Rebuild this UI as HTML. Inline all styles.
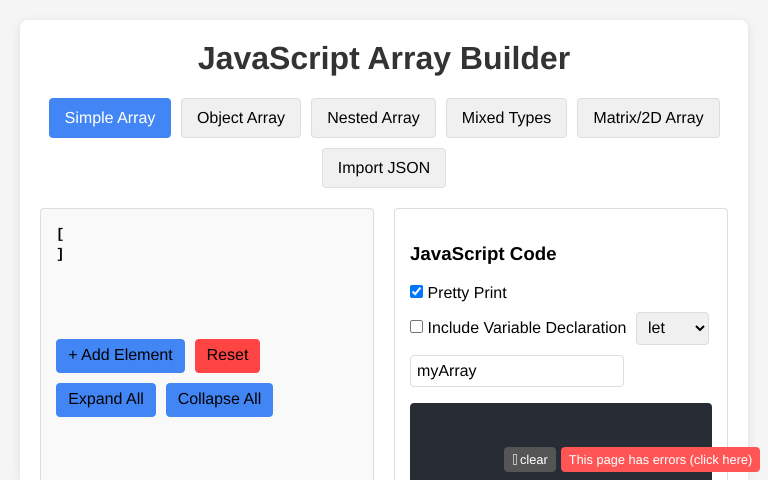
<!DOCTYPE html>
<html><head><meta charset="utf-8"><style>
html,body{margin:0;padding:0;width:768px;height:480px;overflow:hidden;background:#f5f5f5;font-family:"Liberation Sans",Arial,sans-serif;text-rendering:geometricPrecision;}
*{box-sizing:border-box}
#w{position:relative;width:768px;height:480px;overflow:hidden}
.a{position:absolute;white-space:nowrap}
#card{left:20px;top:20px;width:728px;height:460px;background:#fff;border-radius:8px 8px 0 0;box-shadow:0 2px 10px rgba(0,0,0,.1)}
h1{margin:0;left:20px;width:728px;top:40px;text-align:center;font-size:32px;line-height:37px;font-weight:700;color:#333}
.b{height:40px;border:1px solid #ddd;background:#f0f0f0;border-radius:4px;font-size:16px;line-height:40px;text-align:center;color:#000}
.p{border:1px solid #ddd;border-bottom:0;border-radius:4px 4px 0 0;top:208px;width:334px;height:272px}
.g{height:34px;border-radius:4px;background:#4285f4;font-size:16px;line-height:34px;text-align:center;color:#000}
.t{font-size:16px;line-height:18px;color:#000}
</style></head><body>
<div id="w">
<div class="a" id="card"></div>
<h1 class="a">JavaScript Array Builder</h1>
<div class="a b" style="left:49px;top:98px;width:122px;background:#4285f4;border-color:#4285f4;color:#fff">Simple Array</div>
<div class="a b" style="left:181px;top:98px;width:120px">Object Array</div>
<div class="a b" style="left:311px;top:98px;width:125px">Nested Array</div>
<div class="a b" style="left:446px;top:98px;width:121px">Mixed Types</div>
<div class="a b" style="left:577px;top:98px;width:143px">Matrix/2D Array</div>
<div class="a b" style="left:322px;top:148px;width:124px">Import JSON</div>

<div class="a p" style="left:40px;background:#f9f9f9"></div>
<div class="a" style="left:56px;top:226px;font:bold 14px/18px 'Liberation Mono',monospace;color:#000">[</div>
<div class="a" style="left:56px;top:246px;font:bold 14px/18px 'Liberation Mono',monospace;color:#000">]</div>
<div class="a g" style="left:56px;top:339px;width:129px">+ Add Element</div>
<div class="a g" style="left:195px;top:339px;width:65px;background:#f44">Reset</div>
<div class="a g" style="left:56px;top:383px;width:100px">Expand All</div>
<div class="a g" style="left:166px;top:383px;width:107px">Collapse All</div>

<div class="a p" style="left:394px;background:#fff"></div>
<div class="a" style="left:410px;top:243px;font-size:18.72px;font-weight:700;line-height:22px;color:#000">JavaScript Code</div>
<input class="a" type="checkbox" checked style="left:410px;top:285px;width:13px;height:13px;margin:0">
<div class="a t" style="left:427.5px;top:285px">Pretty Print</div>
<input class="a" type="checkbox" style="left:410px;top:320px;width:13px;height:13px;margin:0">
<div class="a t" style="left:427.5px;top:320px">Include Variable Declaration</div>
<select class="a" style="left:636px;top:312px;width:73px;height:33px;margin:0;padding:0 0 0 7px;font:16px 'Liberation Sans',sans-serif;background-color:#f0f0f0;border:1px solid #ddd;border-radius:4px;color:#000;text-rendering:geometricPrecision"><option>let</option></select>
<input class="a" type="text" value="myArray" style="left:410px;top:355px;width:214px;height:32px;margin:0;padding:2px 6px 0;font:16px 'Liberation Sans',sans-serif;border:1px solid #ddd;border-radius:4px;color:#000;background:#fff;text-rendering:geometricPrecision">
<div class="a" style="left:410px;top:403px;width:302px;height:77px;background:#282c34;border-radius:4px 4px 0 0"></div>

<div class="a" style="left:504px;top:447px;width:52px;height:25px;background:#555;border-radius:4px"></div>
<div class="a" style="left:513px;top:454px;width:4px;height:11px;border:1px solid #bbb"></div>
<div class="a" style="left:520px;top:447px;color:#fff;font-size:12.8px;line-height:25px">clear</div>
<div class="a" style="left:561px;top:447px;width:199px;height:25px;background:#f55;border-radius:4px;color:#fff;font-size:12.8px;line-height:25px;text-align:center">This page has errors (click here)</div>
</div>
</body></html>
